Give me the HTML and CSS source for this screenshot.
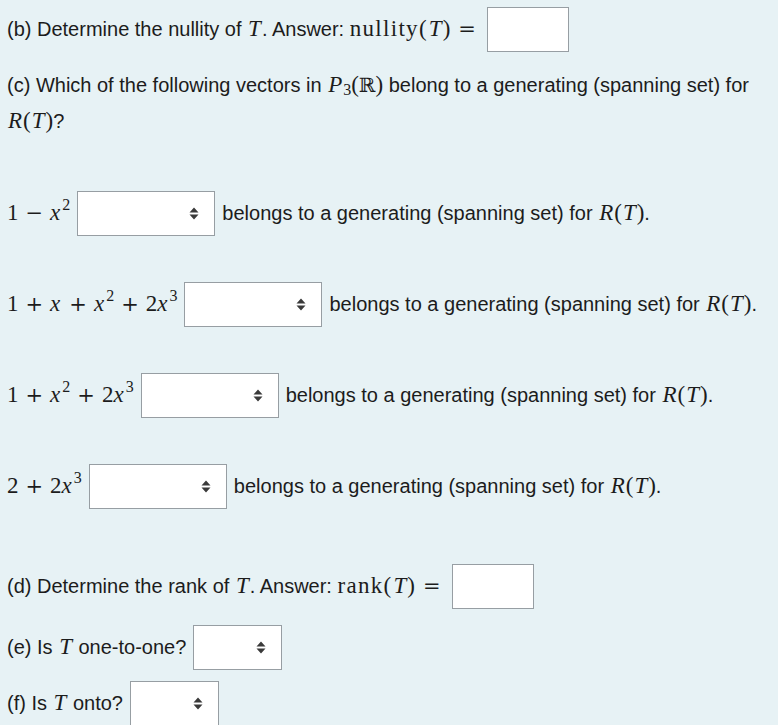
FILE: index.html
```html
<!DOCTYPE html>
<html lang="en">
<head>
    <meta charset="UTF-8">
    <title>Linear transformation questions</title>
    <link rel="stylesheet" href="styles.css">
</head>
<body>
    <div class="problem">
        <!-- part b -->
        <div class="row row-b">
            <span>(b) Determine the nullity of <span class="math"><i class="mi">T</i></span>. Answer: <span class="math"><span class="mn fn">nullity(</span><i class="mi">T</i><span class="mn">)</span><span class="rel">=</span></span></span>
            <span class="answer"></span>
        </div>

        <!-- part c -->
        <p class="question">(c) Which of the following vectors in <span class="math"><i class="mi">P</i><sub>3</sub><span class="mn">(</span><span class="bb">ℝ</span><span class="mn">)</span></span> belong to a generating (spanning set) for <span class="math"><i class="mi">R</i><span class="mn">(</span><i class="mi">T</i><span class="mn">)</span></span>?</p>

        <div class="row vec vec-1">
            <span class="math"><span class="mn">1</span><span class="op">−</span><i class="mi x">x</i><sup>2</sup></span>
            <span class="select wide"><svg width="10" height="13" viewBox="0 0 10 13"><path d="M5 0.5 L9.5 5.5 L0.5 5.5 Z M5 12.5 L9.5 7.5 L0.5 7.5 Z" fill="#3a3a3a"/></svg></span>
            <span>belongs to a generating (spanning set) for <span class="math"><i class="mi">R</i><span class="mn">(</span><i class="mi">T</i><span class="mn">)</span></span>.</span>
        </div>

        <div class="row vec">
            <span class="math"><span class="mn">1</span><span class="op">+</span><i class="mi x">x</i><span class="op">+</span><i class="mi x">x</i><sup>2</sup><span class="op">+</span><span class="mn">2</span><i class="mi x">x</i><sup>3</sup></span>
            <span class="select wide"><svg width="10" height="13" viewBox="0 0 10 13"><path d="M5 0.5 L9.5 5.5 L0.5 5.5 Z M5 12.5 L9.5 7.5 L0.5 7.5 Z" fill="#3a3a3a"/></svg></span>
            <span>belongs to a generating (spanning set) for <span class="math"><i class="mi">R</i><span class="mn">(</span><i class="mi">T</i><span class="mn">)</span></span>.</span>
        </div>

        <div class="row vec">
            <span class="math"><span class="mn">1</span><span class="op">+</span><i class="mi x">x</i><sup>2</sup><span class="op">+</span><span class="mn">2</span><i class="mi x">x</i><sup>3</sup></span>
            <span class="select wide"><svg width="10" height="13" viewBox="0 0 10 13"><path d="M5 0.5 L9.5 5.5 L0.5 5.5 Z M5 12.5 L9.5 7.5 L0.5 7.5 Z" fill="#3a3a3a"/></svg></span>
            <span>belongs to a generating (spanning set) for <span class="math"><i class="mi">R</i><span class="mn">(</span><i class="mi">T</i><span class="mn">)</span></span>.</span>
        </div>

        <div class="row vec">
            <span class="math"><span class="mn">2</span><span class="op">+</span><span class="mn">2</span><i class="mi x">x</i><sup>3</sup></span>
            <span class="select wide"><svg width="10" height="13" viewBox="0 0 10 13"><path d="M5 0.5 L9.5 5.5 L0.5 5.5 Z M5 12.5 L9.5 7.5 L0.5 7.5 Z" fill="#3a3a3a"/></svg></span>
            <span>belongs to a generating (spanning set) for <span class="math"><i class="mi">R</i><span class="mn">(</span><i class="mi">T</i><span class="mn">)</span></span>.</span>
        </div>

        <!-- part d -->
        <div class="row row-d">
            <span>(d) Determine the rank of <span class="math"><i class="mi">T</i></span>. Answer: <span class="math"><span class="mn fn">rank(</span><i class="mi">T</i><span class="mn">)</span><span class="rel">=</span></span></span>
            <span class="answer"></span>
        </div>

        <!-- part e -->
        <div class="row row-e">
            <span>(e) Is <span class="math"><i class="mi">T</i></span> one-to-one?</span>
            <span class="select narrow"><svg width="10" height="13" viewBox="0 0 10 13"><path d="M5 0.5 L9.5 5.5 L0.5 5.5 Z M5 12.5 L9.5 7.5 L0.5 7.5 Z" fill="#3a3a3a"/></svg></span>
        </div>

        <!-- part f -->
        <div class="row row-f">
            <span>(f) Is <span class="math"><i class="mi">T</i></span> onto?</span>
            <span class="select narrow"><svg width="10" height="13" viewBox="0 0 10 13"><path d="M5 0.5 L9.5 5.5 L0.5 5.5 Z M5 12.5 L9.5 7.5 L0.5 7.5 Z" fill="#3a3a3a"/></svg></span>
        </div>
    </div>
</body>
</html>
```

FILE: styles.css
```css
html, body {
    margin: 0;
    padding: 0;
    background-color: #e7f2f5;
}
body {
    font-family: "Liberation Sans", Arial, sans-serif;
    font-size: 20px;
    color: #1c1c1c;
}
.problem {
    padding: 0 7px;
}
.row {
    display: flex;
    align-items: center;
    height: 46px;
    white-space: nowrap;
}
.question {
    margin: 15px 0 0;
    line-height: 35px;
}

/* math */
.math {
    font-family: "Liberation Serif", "DejaVu Serif", serif;
    font-size: 23px;
    white-space: nowrap;
}
.mi {
    font-style: italic;
    padding: 0 1px;
}
.mi.x {
    padding: 0 2px 0 0;
}
.fn {
    letter-spacing: 1.3px;
}
.op {
    font-family: "DejaVu Serif", serif;
    font-size: 21px;
    margin: 0 7px;
}
.rel {
    font-family: "DejaVu Serif", serif;
    font-size: 21px;
    margin: 0 5px 0 8px;
}
.bb {
    font-family: "DejaVu Serif", serif;
    font-size: 20px;
}
.math sub {
    font-size: 16px;
    vertical-align: -3px;
    line-height: 0;
}
.math sup {
    font-size: 16px;
    vertical-align: 10px;
    line-height: 0;
}

/* answer fields */
.answer {
    display: inline-block;
    box-sizing: border-box;
    width: 82px;
    height: 45px;
    margin-left: 6px;
    background: #fff;
    border: 1px solid #979ea3;
}
.select {
    display: flex;
    align-items: center;
    justify-content: flex-end;
    box-sizing: border-box;
    height: 45px;
    padding-right: 15px;
    margin: 0 7px;
    background: #fff;
    border: 1px solid #979ea3;
}
.select.wide {
    width: 138px;
}
.select.narrow {
    width: 89px;
}

/* vertical rhythm */
.row-b {
    margin-top: 6px;
}
.vec-1 {
    margin-top: 51px;
}
.vec + .vec {
    margin-top: 45px;
}
.row-d {
    margin-top: 54px;
}
.row-e {
    margin-top: 15px;
}
.row-f {
    margin-top: 10px;
}
```
